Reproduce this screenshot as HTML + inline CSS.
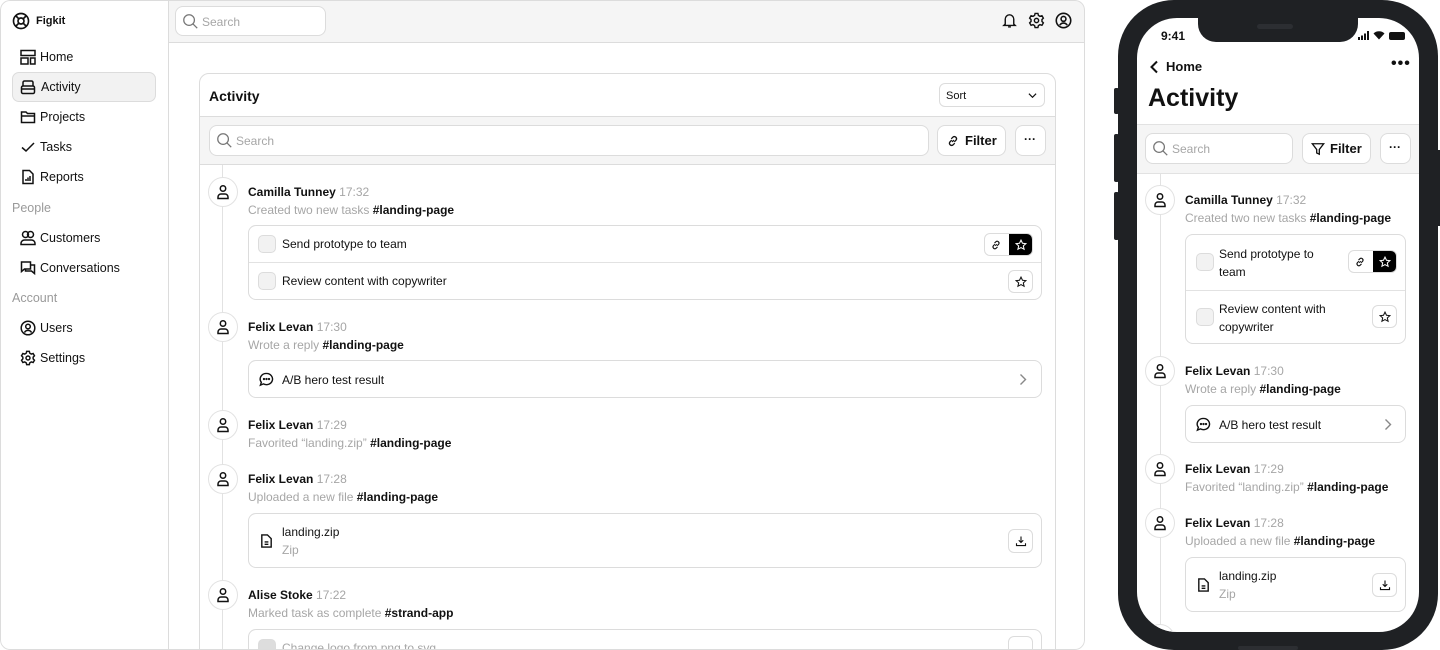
<!DOCTYPE html>
<html><head><meta charset="utf-8"><style>
*{box-sizing:border-box;margin:0;padding:0}
html,body{width:1440px;height:650px;overflow:hidden}
body{background:#fff;font-family:"Liberation Sans",sans-serif;color:#111;position:relative}
.a{position:absolute}
.t{position:absolute;font-size:12px;line-height:16px;white-space:nowrap}
.g{color:#a6a6a6}
.b{font-weight:bold}
.box{position:absolute;border:1px solid #dcdcdc;border-radius:8px;background:#fff}
.btn{position:absolute;border:1px solid #dcdcdc;border-radius:7px;background:#fff}
.av{position:absolute;width:30px;height:30px;border:1px solid #e2e2e2;border-radius:50%;background:#fff;display:flex;align-items:center;justify-content:center}
.cb{position:absolute;width:18px;height:18px;border:1px solid #dcdcdc;border-radius:5px;background:#f2f2f2}
svg{display:block}
.nav{position:absolute;left:12px;width:144px;height:30px;font-size:12.5px;line-height:30px;padding-left:28px}
.nav svg{position:absolute;left:8px;top:7px}
.sec{position:absolute;left:12px;font-size:12.5px;color:#9a9a9a}
</style></head><body>

<!-- desktop window -->
<div class="a" style="left:0;top:0;width:1085px;height:650px;border-radius:10px;overflow:hidden;background:#fff">
 <div class="a" style="left:0;top:0;width:169px;height:650px;border-right:1px solid #dcdcdc;background:#fff">
  <svg class="a" style="left:12px;top:12px" width="18" height="18" viewBox="0 0 24 24" fill="none" stroke="#111" stroke-width="2.2"><circle cx="12" cy="12" r="10"/><circle cx="12" cy="12" r="4"/><path d="M5 5l4 4M19 5l-4 4M5 19l4-4M19 19l-4-4"/></svg>
  <div class="t b" style="left:36px;top:13px;font-size:11px">Figkit</div>
  <div class="nav" style="top:42px"><svg width="16" height="16" viewBox="0 0 16 16" fill="none" stroke="#111" stroke-width="1.5"><rect x="1" y="1.5" width="14" height="5"/><rect x="1" y="9" width="7" height="6"/><rect x="10.5" y="9" width="4.5" height="6"/></svg>Home</div>
  <div class="nav" style="top:72px;background:#f2f2f2;border:1px solid #dcdcdc;border-radius:7px;line-height:28px"><svg width="16" height="16" viewBox="0 0 16 16" fill="none" stroke="#111" stroke-width="1.5" style="top:6px;left:7px"><path d="M3 7V3.5A1.5 1.5 0 0 1 4.5 2h7A1.5 1.5 0 0 1 13 3.5V7"/><rect x="1.5" y="7" width="13" height="7.5" rx="1.5"/><path d="M1.5 10h13"/></svg>Activity</div>
  <div class="nav" style="top:102px"><svg width="16" height="16" viewBox="0 0 16 16" fill="none" stroke="#111" stroke-width="1.5"><path d="M1.5 13.5V3h4.5l1.5 1.5h7v9z"/><path d="M1.5 7h13"/></svg>Projects</div>
  <div class="nav" style="top:132px"><svg width="16" height="16" viewBox="0 0 16 16" fill="none" stroke="#111" stroke-width="1.5"><path d="M2 8.5l4 3.5 8-8"/></svg>Tasks</div>
  <div class="nav" style="top:162px"><svg width="16" height="16" viewBox="0 0 16 16" fill="none" stroke="#111" stroke-width="1.5"><path d="M3 1.5h6.5L13 5v9.5H3z"/><path d="M6 12v-2M8 12V8.5M10 12V7"/></svg>Reports</div>
  <div class="sec" style="top:201px">People</div>
  <div class="nav" style="top:223px"><svg width="16" height="16" viewBox="0 0 16 16" fill="none" stroke="#111" stroke-width="1.5"><circle cx="5.5" cy="4.5" r="3"/><circle cx="10.5" cy="4.5" r="3"/><path d="M1 14.5v-1a3.5 3.5 0 0 1 3.5-3.5h7a3.5 3.5 0 0 1 3.5 3.5v1z"/></svg>Customers</div>
  <div class="nav" style="top:253px"><svg width="16" height="16" viewBox="0 0 16 16" fill="none" stroke="#111" stroke-width="1.5"><path d="M1.5 2h9v7h-6l-3 2.5z"/><path d="M10.5 5h4v8.5l-3-2.5h-6V9"/></svg>Conversations</div>
  <div class="sec" style="top:291px">Account</div>
  <div class="nav" style="top:313px"><svg width="16" height="16" viewBox="0 0 16 16" fill="none" stroke="#111" stroke-width="1.5"><circle cx="8" cy="8" r="6.8"/><circle cx="8" cy="6.5" r="2.3"/><path d="M4.5 12.5a4 4 0 0 1 7 0"/></svg>Users</div>
  <div class="nav" style="top:343px"><svg width="16" height="16" viewBox="0 0 24 24" fill="none" stroke="#111" stroke-width="2.2"><circle cx="12" cy="12" r="3"/><path d="M10 2h4l.7 2.8 2.2 1.3 2.8-.8 2 3.4-2 2v2.6l2 2-2 3.4-2.8-.8-2.2 1.3L14 22h-4l-.7-2.8-2.2-1.3-2.8.8-2-3.4 2-2v-2.6l-2-2 2-3.4 2.8.8 2.2-1.3z"/></svg>Settings</div>
 </div>
 <div class="a" style="left:169px;top:0;width:916px;height:43px;background:#f5f5f5;border-bottom:1px solid #dcdcdc">
  <div class="btn" style="left:6px;top:6px;width:151px;height:30px;border-radius:8px">
   <svg class="a" style="left:6px;top:6px" width="17" height="17" viewBox="0 0 24 24" fill="none" stroke="#777" stroke-width="1.8"><circle cx="10" cy="10" r="7.5"/><path d="M15.5 15.5l6 6"/></svg>
   <div class="t g" style="left:26px;top:7px">Search</div>
  </div>
  <svg class="a" style="left:832px;top:12px" width="17" height="17" viewBox="0 0 24 24" fill="none" stroke="#111" stroke-width="2"><path d="M6 17V10a6 6 0 0 1 12 0v7l2 2H4z"/><path d="M10 21h4"/></svg>
  <svg class="a" style="left:859px;top:12px" width="17" height="17" viewBox="0 0 24 24" fill="none" stroke="#111" stroke-width="2"><circle cx="12" cy="12" r="3"/><path d="M10 2h4l.7 2.8 2.2 1.3 2.8-.8 2 3.4-2 2v2.6l2 2-2 3.4-2.8-.8-2.2 1.3L14 22h-4l-.7-2.8-2.2-1.3-2.8.8-2-3.4 2-2v-2.6l-2-2 2-3.4 2.8.8 2.2-1.3z"/></svg>
  <svg class="a" style="left:886px;top:12px" width="17" height="17" viewBox="0 0 16 16" fill="none" stroke="#111" stroke-width="1.5"><circle cx="8" cy="8" r="6.8"/><circle cx="8" cy="6.5" r="2.3"/><path d="M4.5 12.5a4 4 0 0 1 7 0"/></svg>
 </div>
 <div class="a" style="left:199px;top:73px;width:857px;height:620px;border:1px solid #dcdcdc;border-radius:10px;overflow:hidden;background:#fff">
  <div class="t b" style="left:9px;top:14px;font-size:14px">Activity</div>
  <div class="btn" style="left:739px;top:9px;width:106px;height:24px;border-radius:6px">
   <div class="t" style="left:6px;top:4px;font-size:11px">Sort</div>
   <svg class="a" style="left:88px;top:8px" width="9" height="7" viewBox="0 0 10 7" fill="none" stroke="#111" stroke-width="1.3"><path d="M1 1.5l4 4 4-4"/></svg>
  </div>
  <div class="a" style="left:0;top:42px;width:857px;height:49px;background:#f5f5f5;border-top:1px solid #dcdcdc;border-bottom:1px solid #dcdcdc">
   <div class="btn" style="left:9px;top:8px;width:720px;height:31px;border-radius:8px">
    <svg class="a" style="left:6px;top:6px" width="17" height="17" viewBox="0 0 24 24" fill="none" stroke="#777" stroke-width="1.8"><circle cx="10" cy="10" r="7.5"/><path d="M15.5 15.5l6 6"/></svg>
    <div class="t g" style="left:26px;top:7px">Search</div>
   </div>
   <div class="btn" style="left:737px;top:8px;width:69px;height:31px;border-radius:8px">
    <svg class="a" style="left:8px;top:8px" width="14" height="14" viewBox="0 0 16 16" fill="none" stroke="#111" stroke-width="1.5"><path d="M7 9l2-2M6 5.5l2-2a2.5 2.5 0 0 1 3.5 3.5l-2 2M10 10.5l-2 2a2.5 2.5 0 0 1-3.5-3.5l2-2"/></svg>
    <div class="t b" style="left:27px;top:7px;font-size:13px">Filter</div>
   </div>
   <div class="btn" style="left:815px;top:8px;width:31px;height:31px;border-radius:8px"><div class="t b" style="left:8px;top:5px">···</div></div>
  </div>
 </div>
 <div class="a" style="left:222px;top:165px;width:1px;height:490px;background:#e2e2e2"></div>

 <div class="av" style="left:208px;top:177px"><svg width="16" height="16" viewBox="0 0 16 16" fill="none" stroke="#111" stroke-width="1.5"><circle cx="8" cy="4.5" r="2.7"/><path d="M3 14.5v-1.5a3 3 0 0 1 3-3h4a3 3 0 0 1 3 3v1.5z"/></svg></div>
 <div class="t" style="left:248px;top:184px"><span class="b">Camilla Tunney</span> <span class="g">17:32</span></div>
 <div class="t" style="left:248px;top:202px"><span class="g">Created two new tasks</span> <span class="b">#landing-page</span></div>
 <div class="box" style="left:248px;top:225px;width:794px;height:75px">
  <div class="cb" style="left:9px;top:9px"></div>
  <div class="t" style="left:33px;top:10px">Send prototype to team</div>
  <div class="a" style="left:0;top:36px;width:792px;height:1px;background:#e2e2e2"></div>
  <div class="cb" style="left:9px;top:46px"></div>
  <div class="t" style="left:33px;top:47px">Review content with copywriter</div>
  <div class="btn" style="left:735px;top:7px;width:49px;height:23px;border-radius:6px;overflow:hidden">
   <svg class="a" style="left:5px;top:5px" width="12" height="12" viewBox="0 0 16 16" fill="none" stroke="#111" stroke-width="1.5"><path d="M7 9l2-2M6 5.5l2-2a2.5 2.5 0 0 1 3.5 3.5l-2 2M10 10.5l-2 2a2.5 2.5 0 0 1-3.5-3.5l2-2"/></svg>
   <div class="a" style="left:24px;top:0;width:25px;height:23px;background:#000"><svg class="a" style="left:6px;top:5px" width="12" height="12" viewBox="0 0 16 16" fill="none" stroke="#fff" stroke-width="1.4"><path d="M8 1.5l2 4.2 4.5.5-3.4 3 1 4.5L8 11.4l-4.1 2.3 1-4.5-3.4-3 4.5-.5z"/></svg></div>
  </div>
  <div class="btn" style="left:759px;top:44px;width:25px;height:23px;border-radius:6px"><svg class="a" style="left:6px;top:5px" width="12" height="12" viewBox="0 0 16 16" fill="none" stroke="#111" stroke-width="1.4"><path d="M8 1.5l2 4.2 4.5.5-3.4 3 1 4.5L8 11.4l-4.1 2.3 1-4.5-3.4-3 4.5-.5z"/></svg></div>
 </div>

 <div class="av" style="left:208px;top:312px"><svg width="16" height="16" viewBox="0 0 16 16" fill="none" stroke="#111" stroke-width="1.5"><circle cx="8" cy="4.5" r="2.7"/><path d="M3 14.5v-1.5a3 3 0 0 1 3-3h4a3 3 0 0 1 3 3v1.5z"/></svg></div>
 <div class="t" style="left:248px;top:319px"><span class="b">Felix Levan</span> <span class="g">17:30</span></div>
 <div class="t" style="left:248px;top:337px"><span class="g">Wrote a reply</span> <span class="b">#landing-page</span></div>
 <div class="box" style="left:248px;top:360px;width:794px;height:38px">
  <svg class="a" style="left:10px;top:11px" width="15" height="15" viewBox="0 0 16 16" fill="none" stroke="#111" stroke-width="1.5"><path d="M8 1.5a6.5 6 0 1 1-3.3 11.2L1.5 14l1-3A6.5 6 0 0 1 8 1.5z"/><circle cx="5.3" cy="7.5" r=".5" fill="#111"/><circle cx="8" cy="7.5" r=".5" fill="#111"/><circle cx="10.7" cy="7.5" r=".5" fill="#111"/></svg>
  <div class="t" style="left:33px;top:11px">A/B hero test result</div>
  <svg class="a" style="left:770px;top:12px" width="8" height="13" viewBox="0 0 8 13" fill="none" stroke="#888" stroke-width="1.4"><path d="M1.5 1.5l5 5-5 5"/></svg>
 </div>

 <div class="av" style="left:208px;top:410px"><svg width="16" height="16" viewBox="0 0 16 16" fill="none" stroke="#111" stroke-width="1.5"><circle cx="8" cy="4.5" r="2.7"/><path d="M3 14.5v-1.5a3 3 0 0 1 3-3h4a3 3 0 0 1 3 3v1.5z"/></svg></div>
 <div class="t" style="left:248px;top:417px"><span class="b">Felix Levan</span> <span class="g">17:29</span></div>
 <div class="t" style="left:248px;top:435px"><span class="g">Favorited “landing.zip”</span> <span class="b">#landing-page</span></div>

 <div class="av" style="left:208px;top:464px"><svg width="16" height="16" viewBox="0 0 16 16" fill="none" stroke="#111" stroke-width="1.5"><circle cx="8" cy="4.5" r="2.7"/><path d="M3 14.5v-1.5a3 3 0 0 1 3-3h4a3 3 0 0 1 3 3v1.5z"/></svg></div>
 <div class="t" style="left:248px;top:471px"><span class="b">Felix Levan</span> <span class="g">17:28</span></div>
 <div class="t" style="left:248px;top:489px"><span class="g">Uploaded a new file</span> <span class="b">#landing-page</span></div>
 <div class="box" style="left:248px;top:513px;width:794px;height:55px">
  <svg class="a" style="left:10px;top:19px" width="15" height="16" viewBox="0 0 16 16" fill="none" stroke="#111" stroke-width="1.5"><path d="M3 1.5h6l4 4v9H3z"/><path d="M6 9h4M6 11.5h4"/></svg>
  <div class="t" style="left:33px;top:10px">landing.zip</div>
  <div class="t g" style="left:33px;top:28px">Zip</div>
  <div class="btn" style="left:759px;top:15px;width:25px;height:24px;border-radius:6px"><svg class="a" style="left:6px;top:5px" width="12" height="12" viewBox="0 0 16 16" fill="none" stroke="#111" stroke-width="1.5"><path d="M8 2v8M5 7l3 3 3-3M2 11v3h12v-3"/></svg></div>
 </div>

 <div class="av" style="left:208px;top:580px"><svg width="16" height="16" viewBox="0 0 16 16" fill="none" stroke="#111" stroke-width="1.5"><circle cx="8" cy="4.5" r="2.7"/><path d="M3 14.5v-1.5a3 3 0 0 1 3-3h4a3 3 0 0 1 3 3v1.5z"/></svg></div>
 <div class="t" style="left:248px;top:587px"><span class="b">Alise Stoke</span> <span class="g">17:22</span></div>
 <div class="t" style="left:248px;top:605px"><span class="g">Marked task as complete</span> <span class="b">#strand-app</span></div>
 <div class="box" style="left:248px;top:629px;width:794px;height:40px">
  <div class="cb" style="left:9px;top:9px;background:#ddd"></div>
  <div class="t g" style="left:33px;top:10px">Change logo from png to svg</div>
  <div class="btn" style="left:759px;top:6px;width:25px;height:23px;border-radius:6px"></div>
 </div>
 <div class="a" style="left:0;top:0;width:1085px;height:650px;border:1px solid #dcdcdc;border-radius:10px"></div>
</div>

<!-- phone -->
<div class="a" style="left:1118px;top:0;width:320px;height:650px;background:#1f2124;border-radius:56px"></div>
<div class="a" style="left:1114px;top:88px;width:5px;height:26px;background:#1f2124;border-radius:2px"></div>
<div class="a" style="left:1114px;top:134px;width:5px;height:48px;background:#1f2124;border-radius:2px"></div>
<div class="a" style="left:1114px;top:192px;width:5px;height:48px;background:#1f2124;border-radius:2px"></div>
<div class="a" style="left:1436px;top:150px;width:4px;height:76px;background:#1f2124"></div>
<div class="a" style="left:1137px;top:18px;width:282px;height:614px;background:#fff;border-radius:40px;overflow:hidden">
 <div class="a" style="left:61px;top:-2px;width:160px;height:26px;background:#1f2124;border-radius:0 0 18px 18px"></div>
 <div class="a" style="left:120px;top:6px;width:36px;height:5px;background:#2c2e32;border-radius:3px"></div>
 <div class="t b" style="left:24px;top:10px;font-size:12px">9:41</div>
 <svg class="a" style="left:221px;top:13px" width="12" height="9" viewBox="0 0 12 9" fill="#111"><rect x="0" y="6" width="2" height="3"/><rect x="3" y="4.5" width="2" height="4.5"/><rect x="6" y="2.5" width="2" height="6.5"/><rect x="9" y="0" width="2" height="9"/></svg>
 <svg class="a" style="left:236px;top:12px" width="12" height="10" viewBox="0 0 12 10" fill="#111"><path d="M6 9.5L0.5 3.5a8 8 0 0 1 11 0z"/></svg>
 <div class="a" style="left:252px;top:14px;width:16px;height:8px;background:#111;border-radius:2px"></div>
 <svg class="a" style="left:12px;top:42px" width="10" height="14" viewBox="0 0 10 14" fill="none" stroke="#111" stroke-width="2"><path d="M8 1.5L2.5 7 8 12.5"/></svg>
 <div class="t b" style="left:29px;top:41px;font-size:13px">Home</div>
 <div class="t b" style="left:254px;top:38px;font-size:16px;letter-spacing:1px">•••</div>
 <div class="t b" style="left:11px;top:64px;font-size:25px;line-height:32px">Activity</div>
 <div class="a" style="left:0;top:106px;width:282px;height:50px;background:#f5f5f5;border-top:1px solid #e2e2e2;border-bottom:1px solid #e2e2e2">
  <div class="btn" style="left:8px;top:8px;width:148px;height:31px;border-radius:8px">
   <svg class="a" style="left:6px;top:6px" width="17" height="17" viewBox="0 0 24 24" fill="none" stroke="#777" stroke-width="1.8"><circle cx="10" cy="10" r="7.5"/><path d="M15.5 15.5l6 6"/></svg>
   <div class="t g" style="left:26px;top:7px">Search</div>
  </div>
  <div class="btn" style="left:165px;top:8px;width:69px;height:31px;border-radius:8px">
   <svg class="a" style="left:8px;top:8px" width="14" height="14" viewBox="0 0 16 16" fill="none" stroke="#111" stroke-width="1.5"><path d="M1.5 2h13L9.5 8.5V14l-3-1.5v-4z"/></svg>
   <div class="t b" style="left:27px;top:7px;font-size:13px">Filter</div>
  </div>
  <div class="btn" style="left:243px;top:8px;width:31px;height:31px;border-radius:8px"><div class="t b" style="left:8px;top:5px">···</div></div>
 </div>
 <div class="a" style="left:23px;top:156px;width:1px;height:470px;background:#e2e2e2"></div>

 <div class="av" style="left:8px;top:167px"><svg width="16" height="16" viewBox="0 0 16 16" fill="none" stroke="#111" stroke-width="1.5"><circle cx="8" cy="4.5" r="2.7"/><path d="M3 14.5v-1.5a3 3 0 0 1 3-3h4a3 3 0 0 1 3 3v1.5z"/></svg></div>
 <div class="t" style="left:48px;top:174px"><span class="b">Camilla Tunney</span> <span class="g">17:32</span></div>
 <div class="t" style="left:48px;top:192px"><span class="g">Created two new tasks</span> <span class="b">#landing-page</span></div>
 <div class="box" style="left:48px;top:216px;width:221px;height:110px">
  <div class="cb" style="left:10px;top:18px"></div>
  <div class="t" style="left:33px;top:10px;line-height:18px;white-space:normal;width:110px">Send prototype to team</div>
  <div class="a" style="left:0;top:55px;width:219px;height:1px;background:#e2e2e2"></div>
  <div class="cb" style="left:10px;top:73px"></div>
  <div class="t" style="left:33px;top:65px;line-height:18px;white-space:normal;width:120px">Review content with copywriter</div>
  <div class="btn" style="left:162px;top:15px;width:49px;height:23px;border-radius:6px;overflow:hidden">
   <svg class="a" style="left:5px;top:5px" width="12" height="12" viewBox="0 0 16 16" fill="none" stroke="#111" stroke-width="1.5"><path d="M7 9l2-2M6 5.5l2-2a2.5 2.5 0 0 1 3.5 3.5l-2 2M10 10.5l-2 2a2.5 2.5 0 0 1-3.5-3.5l2-2"/></svg>
   <div class="a" style="left:24px;top:0;width:25px;height:23px;background:#000"><svg class="a" style="left:6px;top:5px" width="12" height="12" viewBox="0 0 16 16" fill="none" stroke="#fff" stroke-width="1.4"><path d="M8 1.5l2 4.2 4.5.5-3.4 3 1 4.5L8 11.4l-4.1 2.3 1-4.5-3.4-3 4.5-.5z"/></svg></div>
  </div>
  <div class="btn" style="left:186px;top:70px;width:25px;height:23px;border-radius:6px"><svg class="a" style="left:6px;top:5px" width="12" height="12" viewBox="0 0 16 16" fill="none" stroke="#111" stroke-width="1.4"><path d="M8 1.5l2 4.2 4.5.5-3.4 3 1 4.5L8 11.4l-4.1 2.3 1-4.5-3.4-3 4.5-.5z"/></svg></div>
 </div>

 <div class="av" style="left:8px;top:338px"><svg width="16" height="16" viewBox="0 0 16 16" fill="none" stroke="#111" stroke-width="1.5"><circle cx="8" cy="4.5" r="2.7"/><path d="M3 14.5v-1.5a3 3 0 0 1 3-3h4a3 3 0 0 1 3 3v1.5z"/></svg></div>
 <div class="t" style="left:48px;top:345px"><span class="b">Felix Levan</span> <span class="g">17:30</span></div>
 <div class="t" style="left:48px;top:363px"><span class="g">Wrote a reply</span> <span class="b">#landing-page</span></div>
 <div class="box" style="left:48px;top:387px;width:221px;height:38px">
  <svg class="a" style="left:10px;top:11px" width="15" height="15" viewBox="0 0 16 16" fill="none" stroke="#111" stroke-width="1.5"><path d="M8 1.5a6.5 6 0 1 1-3.3 11.2L1.5 14l1-3A6.5 6 0 0 1 8 1.5z"/><circle cx="5.3" cy="7.5" r=".5" fill="#111"/><circle cx="8" cy="7.5" r=".5" fill="#111"/><circle cx="10.7" cy="7.5" r=".5" fill="#111"/></svg>
  <div class="t" style="left:33px;top:11px">A/B hero test result</div>
  <svg class="a" style="left:198px;top:12px" width="8" height="13" viewBox="0 0 8 13" fill="none" stroke="#888" stroke-width="1.4"><path d="M1.5 1.5l5 5-5 5"/></svg>
 </div>

 <div class="av" style="left:8px;top:436px"><svg width="16" height="16" viewBox="0 0 16 16" fill="none" stroke="#111" stroke-width="1.5"><circle cx="8" cy="4.5" r="2.7"/><path d="M3 14.5v-1.5a3 3 0 0 1 3-3h4a3 3 0 0 1 3 3v1.5z"/></svg></div>
 <div class="t" style="left:48px;top:443px"><span class="b">Felix Levan</span> <span class="g">17:29</span></div>
 <div class="t" style="left:48px;top:461px"><span class="g">Favorited “landing.zip”</span> <span class="b">#landing-page</span></div>

 <div class="av" style="left:8px;top:490px"><svg width="16" height="16" viewBox="0 0 16 16" fill="none" stroke="#111" stroke-width="1.5"><circle cx="8" cy="4.5" r="2.7"/><path d="M3 14.5v-1.5a3 3 0 0 1 3-3h4a3 3 0 0 1 3 3v1.5z"/></svg></div>
 <div class="t" style="left:48px;top:497px"><span class="b">Felix Levan</span> <span class="g">17:28</span></div>
 <div class="t" style="left:48px;top:515px"><span class="g">Uploaded a new file</span> <span class="b">#landing-page</span></div>
 <div class="box" style="left:48px;top:539px;width:221px;height:55px">
  <svg class="a" style="left:10px;top:19px" width="15" height="16" viewBox="0 0 16 16" fill="none" stroke="#111" stroke-width="1.5"><path d="M3 1.5h6l4 4v9H3z"/><path d="M6 9h4M6 11.5h4"/></svg>
  <div class="t" style="left:33px;top:10px">landing.zip</div>
  <div class="t g" style="left:33px;top:28px">Zip</div>
  <div class="btn" style="left:186px;top:15px;width:25px;height:24px;border-radius:6px"><svg class="a" style="left:6px;top:5px" width="12" height="12" viewBox="0 0 16 16" fill="none" stroke="#111" stroke-width="1.5"><path d="M8 2v8M5 7l3 3 3-3M2 11v3h12v-3"/></svg></div>
 </div>
 <div class="av" style="left:8px;top:606px"></div>
</div>
<div class="a" style="left:1238px;top:646px;width:60px;height:4px;background:#2c2e32;border-radius:2px"></div>
</body></html>
